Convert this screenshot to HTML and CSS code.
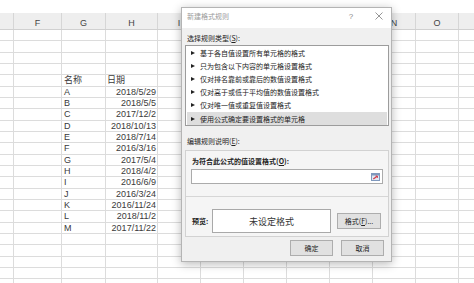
FILE: index.html
```html
<!DOCTYPE html>
<html lang="zh-CN">
<head>
<meta charset="utf-8">
<title>新建格式规则</title>
<link rel="stylesheet" href="styles.css">
</head>
<body>
<div class="sheet">
  <div class="cols head">
    <span></span><span>F</span><span>G</span><span>H</span><span>I</span><span></span><span></span><span></span><span></span><span>N</span><span>O</span><span></span>
  </div>
  <div class="grid">
    <div class="cols row"></div>
    <div class="cols row"></div>
    <div class="cols row"></div>
    <div class="cols row"></div>
    <div class="cols row"><span class="name">名称</span><span class="date lefty">日期</span></div>
    <div class="cols row"><span class="name">A</span><span class="date">2018/5/29</span></div>
    <div class="cols row"><span class="name">B</span><span class="date">2018/5/5</span></div>
    <div class="cols row"><span class="name">C</span><span class="date">2017/12/2</span></div>
    <div class="cols row"><span class="name">D</span><span class="date">2018/10/13</span></div>
    <div class="cols row"><span class="name">E</span><span class="date">2018/7/14</span></div>
    <div class="cols row"><span class="name">F</span><span class="date">2016/3/16</span></div>
    <div class="cols row"><span class="name">G</span><span class="date">2017/5/4</span></div>
    <div class="cols row"><span class="name">H</span><span class="date">2018/4/2</span></div>
    <div class="cols row"><span class="name">I</span><span class="date">2016/6/9</span></div>
    <div class="cols row"><span class="name">J</span><span class="date">2016/3/24</span></div>
    <div class="cols row"><span class="name">K</span><span class="date">2016/11/24</span></div>
    <div class="cols row"><span class="name">L</span><span class="date">2018/11/2</span></div>
    <div class="cols row"><span class="name">M</span><span class="date">2017/11/22</span></div>
    <div class="cols row"></div>
    <div class="cols row"></div>
    <div class="cols row"></div>
    <div class="cols row"></div>
    <div class="cols row"></div>
  </div>
</div>

<div class="dialog">
  <div class="titlebar">
    <span class="title">新建格式规则</span>
    <span class="tb-help">?</span>
    <span class="tb-close">
      <svg width="8" height="8" viewBox="0 0 8 8"><path d="M0.5 0.5 L7.5 7.5 M7.5 0.5 L0.5 7.5" stroke="#8a8a8a" stroke-width="0.9" fill="none"/></svg>
    </span>
  </div>
  <div class="content">
    <div class="lbl">选择规则类型(<u>S</u>):</div>
    <div class="list">
      <div class="item"><span class="arrow"></span>基于各自值设置所有单元格的格式</div>
      <div class="item"><span class="arrow"></span>只为包含以下内容的单元格设置格式</div>
      <div class="item"><span class="arrow"></span>仅对排名靠前或靠后的数值设置格式</div>
      <div class="item"><span class="arrow"></span>仅对高于或低于平均值的数值设置格式</div>
      <div class="item"><span class="arrow"></span>仅对唯一值或重复值设置格式</div>
      <div class="item selected"><span class="arrow"></span>使用公式确定要设置格式的单元格</div>
    </div>
    <div class="lbl lbl2">编辑规则说明(<u>E</u>):</div>
    <div class="group">
      <div class="glbl">为符合此公式的值设置格式(<u>O</u>):</div>
      <div class="input">
        <svg class="collapse" width="9" height="8" viewBox="0 0 9 8">
          <rect x="0.5" y="0.5" width="8" height="7" fill="#dfe8f3" stroke="#7f98bd"/>
          <rect x="1" y="1" width="7" height="1.5" fill="#7f98bd"/>
          <path d="M2.3 6 L6.2 3.2" stroke="#d23a4a" stroke-width="1.3"/>
          <path d="M4.6 3 L6.5 3 L6.5 4.9" stroke="#d23a4a" stroke-width="0.9" fill="none"/>
        </svg>
      </div>
      <div class="sep"></div>
      <div class="preview">
        <span class="plbl">预览:</span>
        <div class="pbox">未设定格式</div>
        <button class="btn fbtn">格式(<u>F</u>)...</button>
      </div>
    </div>
    <div class="actions">
      <button class="btn">确定</button>
      <button class="btn">取消</button>
    </div>
  </div>
</div>
</body>
</html>
```

FILE: styles.css
```css
* {
  box-sizing: border-box;
  margin: 0;
  padding: 0;
}

html, body {
  width: 474px;
  height: 283px;
  overflow: hidden;
  background: #fff;
}

body {
  position: relative;
  font-family: "Liberation Sans", "Noto Sans CJK SC", sans-serif;
  color: #333;
}

/* ---------- spreadsheet ---------- */
.sheet {
  padding-top: 13px;
  width: 474px;
  overflow: hidden;
}

.cols {
  display: grid;
  grid-template-columns: 14px 48px 44px 52px repeat(7, 43px) 15px;
}

.head {
  height: 17px;
  background: #eeeeee;
  border-bottom: 1px solid #d0d0d0;
  font-size: 9px;
  color: #444;
}

.head span {
  display: flex;
  align-items: flex-end;
  justify-content: center;
  padding-bottom: 1px;
  line-height: 10px;
  border-right: 1px solid #d6d6d6;
}

.head span:last-child {
  border-right: none;
}

.grid {
  background:
    linear-gradient(#dcdcdc, #dcdcdc) 13px 0 / 1px 100% no-repeat,
    linear-gradient(#dcdcdc, #dcdcdc) 61px 0 / 1px 100% no-repeat,
    linear-gradient(#dcdcdc, #dcdcdc) 105px 0 / 1px 100% no-repeat,
    repeating-linear-gradient(to right, #dcdcdc 0 1px, transparent 1px 43px) 157px 0 / calc(100% - 157px) 100% no-repeat;
}

.row {
  height: 11.333px;
  border-bottom: 1px solid #dcdcdc;
  font-size: 9px;
  line-height: 10.3px;
  color: #3a3a3a;
}

.name {
  grid-column: 3;
  padding-left: 2px;
}

.date {
  grid-column: 4;
  text-align: right;
  padding-right: 2px;
}

.date.lefty {
  text-align: left;
  padding-left: 1px;
}

/* ---------- dialog ---------- */
.dialog {
  position: absolute;
  left: 181px;
  top: 7px;
  width: 211px;
  height: 255px;
  background: #f0f0f0;
  border: 1px solid #b4b4b4;
  box-shadow: 0 2px 9px rgba(0, 0, 0, 0.28);
  display: flex;
  flex-direction: column;
  font-family: "Noto Sans CJK SC", "Liberation Sans", sans-serif;
  font-size: 7px;
  color: #222;
}

.titlebar {
  height: 20px;
  flex: none;
  background: #fff;
  display: flex;
  align-items: center;
  padding: 0 0 4px 5px;
  color: #9a9a9a;
}

.title {
  flex: none;
}

.tb-help {
  margin-left: auto;
  width: 10px;
  margin-right: 12px;
  text-align: center;
  font-family: "Liberation Sans", sans-serif;
  font-size: 8px;
  color: #8a8a8a;
}

.tb-close {
  width: 22px;
  margin-right: 1px;
  display: flex;
  justify-content: center;
}

.content {
  flex: 1;
  display: flex;
  flex-direction: column;
  padding: 0 2px 0 3px;
}

.lbl {
  margin-top: 5px;
  padding-left: 2px;
  line-height: 10px;
}

.lbl2 {
  margin-top: 10px;
}

.list {
  margin-top: 2px;
  height: 81px;
  background: #fff;
  border: 1px solid #9c9c9c;
  padding: 0 1px;
}

.item {
  height: 13.2px;
  display: flex;
  align-items: center;
  padding-left: 4px;
  white-space: nowrap;
}

.item.selected {
  background: #dedede;
}

.arrow {
  width: 0;
  height: 0;
  border-top: 2.5px solid transparent;
  border-bottom: 2.5px solid transparent;
  border-left: 4px solid #222;
  margin-right: 5px;
}

.group {
  margin-top: 4px;
  border: 1px solid #d2d2d2;
  background: #f5f5f5;
  padding: 5px 5px 3px;
}

.glbl {
  font-weight: bold;
  line-height: 10px;
  padding-left: 1px;
}

.input {
  margin-top: 3px;
  height: 15px;
  background: #fff;
  border: 1px solid #ababab;
  display: flex;
  align-items: center;
  justify-content: flex-end;
  padding-right: 2px;
}

.sep {
  margin: 12px -5px 0;
  border-top: 1px solid #d6d6d6;
}

.preview {
  margin-top: 12px;
  height: 24px;
  display: flex;
  align-items: center;
}

.plbl {
  width: 21px;
  padding-left: 1px;
  font-weight: bold;
}

.pbox {
  width: 119px;
  height: 24px;
  background: #fff;
  border: 1px solid #a9a9a9;
  display: flex;
  align-items: center;
  justify-content: center;
  font-size: 9px;
  color: #333;
}

.btn {
  width: 43px;
  height: 16px;
  background: #e1e1e1;
  border: 1px solid #adadad;
  font-family: "Noto Sans CJK SC", "Liberation Sans", sans-serif;
  font-size: 7px;
  color: #222;
  display: flex;
  align-items: center;
  justify-content: center;
}

.fbtn {
  width: 44px;
  margin-left: 6px;
}

.actions {
  margin-top: 3px;
  display: flex;
  justify-content: flex-end;
  gap: 8px;
  padding-right: 5px;
}
```
